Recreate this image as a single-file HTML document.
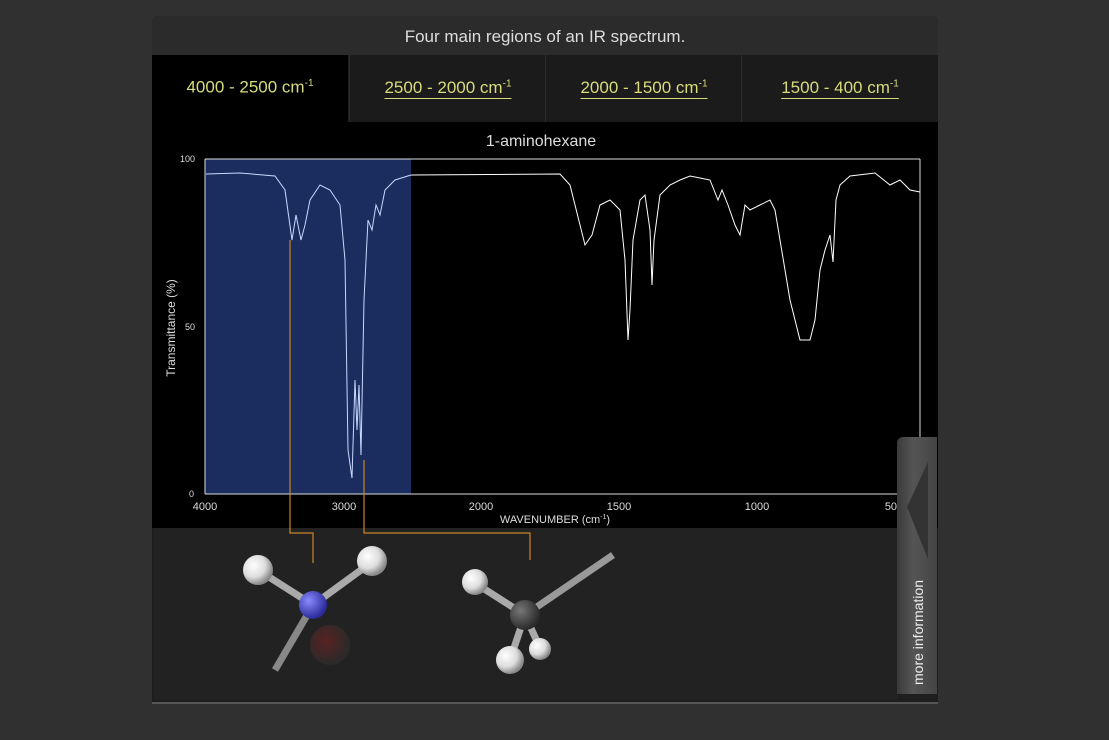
<!DOCTYPE html>
<html><head><meta charset="utf-8"><style>
body{margin:0;width:1109px;height:740px;background:#303030;font-family:"Liberation Sans",sans-serif;position:relative;overflow:hidden}
.frame{position:absolute;left:152px;top:16px;width:786px;height:686px;background:#1e1e1e;border-radius:6px 6px 0 0;overflow:hidden;border-bottom:2px solid #555}
.hdr{position:absolute;left:0;top:0;width:786px;height:39px;background:#2b2b2b;color:#ddd;font-size:17px;text-align:center;line-height:42px}
.tab{position:absolute;top:39px;height:67px;width:196px;background:#1b1b1b;color:#d8dc7a;font-size:17px;text-align:center;line-height:58px;border-left:1px solid #2c2c2c}
.tab span{text-decoration:underline;text-underline-offset:5px}
sup{font-size:10px}
.chart{position:absolute;left:0;top:106px;width:786px;height:406px;background:#000}
.bottom{position:absolute;left:2px;top:512px;width:744px;height:172px;background:#222}
.more{position:absolute;left:897px;top:437px;width:40px;height:257px;background:linear-gradient(90deg,#3a3a3a,#555 40%,#444);border-radius:6px 0 0 0}
</style></head><body>
<div class="frame">
<div class="hdr">Four main regions of an IR spectrum.</div>
<div class="tab" style="left:0;background:#000;border:none">4000 - 2500 cm<sup>-1</sup></div>
<div class="tab" style="left:197px"><span>2500 - 2000 cm<sup>-1</sup></span></div>
<div class="tab" style="left:393px"><span>2000 - 1500 cm<sup>-1</sup></span></div>
<div class="tab" style="left:589px"><span>1500 - 400 cm<sup>-1</sup></span></div>
<div class="chart"></div>
<div class="bottom"></div>
</div>
<svg width="1109" height="740" style="position:absolute;left:0;top:0">
<defs>
<radialGradient id="w" cx="35%" cy="35%" r="65%"><stop offset="0" stop-color="#fff"/><stop offset="0.6" stop-color="#ddd"/><stop offset="1" stop-color="#888"/></radialGradient>
<radialGradient id="b" cx="35%" cy="35%" r="65%"><stop offset="0" stop-color="#8a8aff"/><stop offset="1" stop-color="#2a2a99"/></radialGradient>
<radialGradient id="g" cx="35%" cy="35%" r="65%"><stop offset="0" stop-color="#777"/><stop offset="1" stop-color="#2a2a2a"/></radialGradient>
<radialGradient id="r" cx="40%" cy="40%" r="60%"><stop offset="0" stop-color="#5a2222"/><stop offset="1" stop-color="#2a2a2a"/></radialGradient>
</defs>
<text x="541" y="146" fill="#ddd" font-size="16" text-anchor="middle" font-family="Liberation Sans">1-aminohexane</text>
<rect x="205" y="159" width="206" height="335" fill="#1a2d5e"/>
<line x1="205" y1="159" x2="920" y2="159" stroke="#ddd"/>
<line x1="920" y1="159" x2="920" y2="494" stroke="#ddd"/>
<line x1="205" y1="159" x2="205" y2="494" stroke="#ddd"/>
<line x1="205" y1="494" x2="920" y2="494" stroke="#ddd"/>
<g fill="#ddd" font-size="9" font-family="Liberation Sans">
<text x="180" y="162">100</text><text x="185" y="330">50</text><text x="189" y="497">0</text>
</g>
<g fill="#ddd" font-size="11" font-family="Liberation Sans" text-anchor="middle">
<text x="205" y="510">4000</text><text x="344" y="510">3000</text><text x="481" y="510">2000</text><text x="619" y="510">1500</text><text x="757" y="510">1000</text><text x="894" y="510">500</text>
<text x="555" y="523">WAVENUMBER  (cm<tspan font-size="7" dy="-4">-1</tspan><tspan dy="4">)</tspan></text>
</g>
<text transform="translate(175,328) rotate(-90)" fill="#ddd" font-size="12" text-anchor="middle" font-family="Liberation Sans">Transmittance  (%)</text>
<polyline fill="none" stroke="#c8d8ff" stroke-width="1" points="206,174 240,173 275,176 285,190 292,240 296,215 301,240 305,225 310,200 320,185 330,190 340,205 345,260 348,450 352,478 355,380 357,430 359,385 361,455 364,300 368,220 372,230 376,205 380,215 385,190 395,180 411,175"/>
<polyline fill="none" stroke="#fff" stroke-width="1" points="411,175 560,174 570,185 575,205 585,245 592,235 600,205 610,200 620,210 625,260 628,340 630,310 633,240 640,200 645,195 650,230 652,285 654,240 660,195 670,185 680,180 690,176 700,178 710,180 718,200 722,190 728,205 735,225 740,235 745,205 750,210 760,205 770,200 775,210 780,240 790,300 800,340 810,340 815,320 820,270 825,250 830,235 833,262 836,200 840,185 850,176 875,173 890,185 900,180 910,190 920,192"/>
<polyline fill="none" stroke="#c9862a" stroke-width="1.2" points="290,240 290,533 313,533 313,563"/>
<polyline fill="none" stroke="#c9862a" stroke-width="1.2" points="364,460 364,533 530,533 530,560"/>
<line x1="313" y1="605" x2="258" y2="570" stroke="#aaa" stroke-width="7"/>
<line x1="313" y1="605" x2="372" y2="562" stroke="#aaa" stroke-width="7"/>
<line x1="313" y1="605" x2="275" y2="670" stroke="#888" stroke-width="7"/>
<circle cx="330" cy="645" r="20" fill="url(#r)"/>
<circle cx="313" cy="605" r="14" fill="url(#b)"/>
<circle cx="258" cy="570" r="15" fill="url(#w)"/>
<circle cx="372" cy="561" r="15" fill="url(#w)"/>
<line x1="525" y1="615" x2="475" y2="583" stroke="#aaa" stroke-width="7"/>
<line x1="525" y1="615" x2="613" y2="555" stroke="#999" stroke-width="7"/>
<line x1="525" y1="615" x2="510" y2="660" stroke="#aaa" stroke-width="7"/>
<line x1="525" y1="615" x2="540" y2="648" stroke="#aaa" stroke-width="7"/>
<circle cx="525" cy="615" r="15" fill="url(#g)"/>
<circle cx="475" cy="582" r="13" fill="url(#w)"/>
<circle cx="540" cy="649" r="11" fill="url(#w)"/>
<circle cx="510" cy="660" r="14" fill="url(#w)"/>
</svg>
<div class="more"></div>
<svg width="40" height="257" style="position:absolute;left:897px;top:437px">
<polygon points="31,25 31,122 10,70" fill="#333"/>
<text transform="translate(26,248) rotate(-90)" fill="#eee" font-size="14" font-family="Liberation Sans">more information</text>
</svg>
</body></html>
